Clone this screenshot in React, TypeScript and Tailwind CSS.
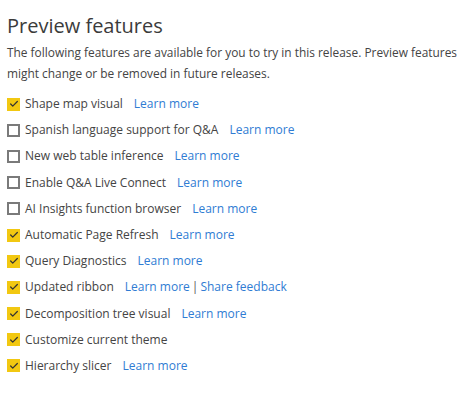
import { Check } from "lucide-react";

type Feature = { label: string; checked: boolean; learn?: boolean; feedback?: boolean };

const features: Feature[] = [
  { label: "Shape map visual", checked: true, learn: true },
  { label: "Spanish language support for Q&A", checked: false, learn: true },
  { label: "New web table inference", checked: false, learn: true },
  { label: "Enable Q&A Live Connect", checked: false, learn: true },
  { label: "AI Insights function browser", checked: false, learn: true },
  { label: "Automatic Page Refresh", checked: true, learn: true },
  { label: "Query Diagnostics", checked: true, learn: true },
  { label: "Updated ribbon", checked: true, learn: true, feedback: true },
  { label: "Decomposition tree visual", checked: true, learn: true },
  { label: "Customize current theme", checked: true },
  { label: "Hierarchy slicer", checked: true, learn: true },
];

function Box({ checked }: { checked: boolean }) {
  return checked ? (
    <span className="w-[13px] h-[13px] bg-[#f2c811] flex items-center justify-center flex-shrink-0">
      <Check className="w-[10px] h-[10px] text-[#333]" strokeWidth={3} />
    </span>
  ) : (
    <span className="w-[13px] h-[13px] border-2 border-[#7a7a7a] bg-white flex-shrink-0" />
  );
}

export default function App() {
  return (
    <div className="w-[474px] h-[415px] bg-white px-[7px] pt-[12px] text-[#333] font-['Open_Sans',sans-serif]">
      <h1 className="text-[20px] leading-[27px] text-[#3b3b3b]">Preview features</h1>
      <p className="text-[11.9px] leading-[21px] mt-[3px] text-[#444]">
        The following features are available for you to try in this release. Preview features might change or be removed in future releases.
      </p>
      <ul className="mt-[7px] flex flex-col">
        {features.map((f) => (
          <li key={f.label} className="h-[26.2px] flex items-center gap-[5px] text-[12px]">
            <Box checked={f.checked} />
            <span className="text-[#444]">{f.label}</span>
            {f.learn && (
              <span className="ml-[6px] text-[#2f7cd3] flex items-center">
                Learn more
                {f.feedback && (
                  <>
                    <span className="mx-[2px] text-[#555]">|</span>
                    Share feedback
                  </>
                )}
              </span>
            )}
          </li>
        ))}
      </ul>
    </div>
  );
}
